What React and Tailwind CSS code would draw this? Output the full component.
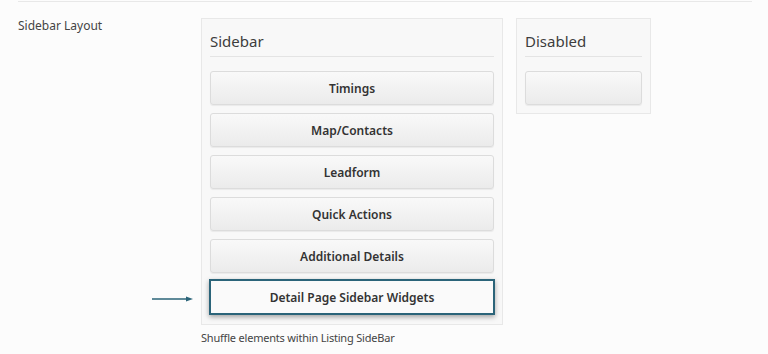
import React from 'react';

const items = ['Timings', 'Map/Contacts', 'Leadform', 'Quick Actions', 'Additional Details'];

function Slot({ children }) {
    return (
        <div className="h-[34px] pt-[2px] flex items-center justify-center rounded-[3px] border border-[#dcdcdc] bg-gradient-to-b from-[#f9f9f9] to-[#ebebeb] shadow-[0_1px_1px_rgba(0,0,0,0.06)] text-[12px] font-semibold text-[#333]">
            {children}
        </div>
    );
}

export default function App() {
    return (
        <div className="relative w-[768px] h-[354px] overflow-hidden bg-[#fcfcfc] font-['Noto_Sans','Open_Sans',sans-serif] text-[#444]">
            <div className="mt-px ml-[18px] w-[734px] h-px bg-[#e8e8e8]"></div>

            <div className="flex mt-[16px]">
                <div className="w-[201px] pl-[18px] pt-[1px] text-[12px] leading-[14px]">Sidebar Layout</div>

                <div className="w-[302px]">
                    <div className="border border-[#e8e8e8] bg-[#f8f8f8] px-[8px] pb-[9px]">
                        <div className="pt-[14px] pb-[6px] border-b border-[#e4e4e4] text-[15px] leading-[17px] text-[#3d3d3d]">Sidebar</div>
                        <div className="mt-[14px] flex flex-col gap-[8px]">
                            {items.map((name) => (
                                <Slot key={name}>{name}</Slot>
                            ))}
                        </div>
                        <div className="mt-[6px] -mx-px h-[36px] pt-[1px] flex items-center justify-center border-2 border-[#2b6479] bg-[#fafafa] shadow-[0_2px_5px_rgba(0,0,0,0.35)] text-[12px] font-semibold text-[#333]">
                            Detail Page Sidebar Widgets
                        </div>
                    </div>
                    <div className="mt-[6px] text-[11px] leading-[14px] tracking-[-0.2px] text-[#444]">Shuffle elements within Listing SideBar</div>
                </div>

                <div className="ml-[13px] self-start w-[135px] border border-[#e8e8e8] bg-[#f8f8f8] px-[8px] pb-[8px]">
                    <div className="pt-[14px] pb-[6px] border-b border-[#e4e4e4] text-[15px] leading-[17px] text-[#3d3d3d]">Disabled</div>
                    <div className="mt-[14px]">
                        <Slot></Slot>
                    </div>
                </div>
            </div>

            {/* pointer arrow */}
            <svg className="absolute left-[152px] top-[295px]" width="42" height="8" viewBox="0 0 42 8">
                <line x1="0" y1="4" x2="36" y2="4" stroke="#2b6479" strokeWidth="1.6" />
                <path d="M34 1.5 L41 4 L34 6.5 Z" fill="#2b6479" />
            </svg>
        </div>
    );
}
